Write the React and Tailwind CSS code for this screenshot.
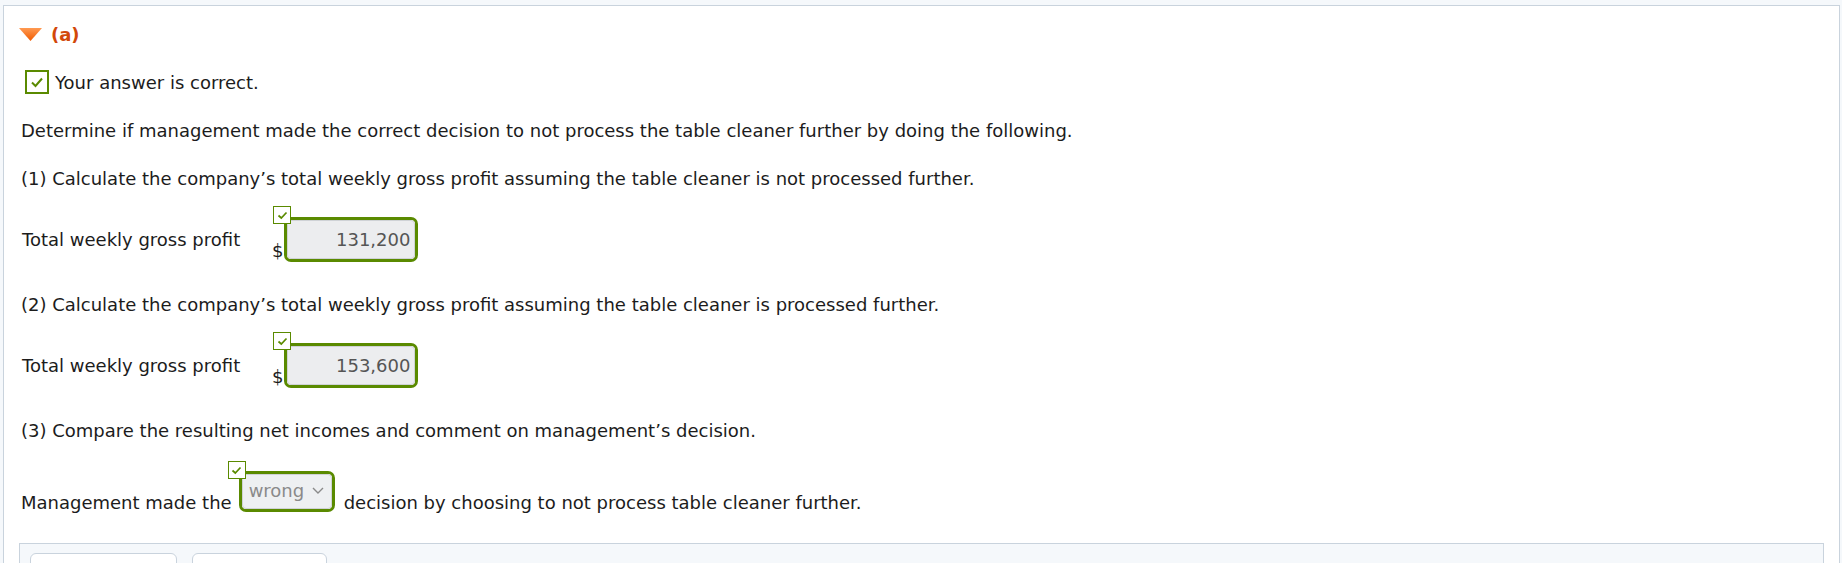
import React from "react";

const GREEN = "#5a8a00";

const BigCheck = () => (
  <span className="flex h-[24px] w-[24px] shrink-0 items-center justify-center border-2 border-[#5a8a00] bg-white">
    <svg width="14" height="12" viewBox="0 0 14 12">
      <path d="M2 6.5 L5.5 10 L12 2.5" fill="none" stroke={GREEN} strokeWidth="2" />
    </svg>
  </span>
);

const SmallCheck = ({ className }) => (
  <span
    className={
      "absolute flex h-[18px] w-[18px] items-center justify-center border-[1.5px] border-[#5a8a00] bg-white " +
      className
    }
  >
    <svg width="11" height="9" viewBox="0 0 11 9">
      <path d="M1.5 4.5 L4.3 7 L9.5 1.5" fill="none" stroke={GREEN} strokeWidth="1.7" />
    </svg>
  </span>
);

const AmountRow = ({ label, value }) => (
  <div className="flex h-[45px] items-center">
    <span className="w-[251px] shrink-0 pl-[1px]">{label}</span>
    <div className="flex h-full items-end">
      <span className="mr-[1px] leading-[18px] mb-[2px]">$</span>
      <div className="relative h-[45px] w-[134px] rounded-[7px] border-[3px] border-[#5a8a00]">
        <SmallCheck className="-left-[14px] -top-[14px]" />
        <div className="flex h-full items-center justify-end rounded-[4px] border border-[#cfd2d6] bg-[#ecedef] pr-[4px] text-[#555]">
          {value}
        </div>
      </div>
    </div>
  </div>
);

export default function App() {
  return (
    <div
      className="h-[563px] overflow-hidden bg-[#f5f8fb] pl-[3px] pr-[2px] pt-[5px] text-[18px] text-[#1c1c1c]"
      style={{ fontFamily: '"DejaVu Sans", Verdana, sans-serif' }}
    >
      <div className="h-[600px] border border-[#c9d3dd] bg-white pl-[17px] pr-[15px]">
        <div className="ml-[-2px] mt-[16px] flex h-[24px] items-center gap-[9px]">
          <svg width="23" height="13" viewBox="0 0 23 13">
            <defs>
              <linearGradient id="tri" x1="0" y1="0" x2="0" y2="1">
                <stop offset="0" stopColor="#ff9a52" />
                <stop offset="1" stopColor="#f05a00" />
              </linearGradient>
            </defs>
            <polygon points="0,0 23,0 11.5,13" fill="url(#tri)" />
          </svg>
          <span className="font-bold text-[#d2480a]">(a)</span>
        </div>

        <div className="mt-[24px] ml-[4px] flex h-[24px] items-center gap-[6px]">
          <BigCheck />
          <span>Your answer is correct.</span>
        </div>

        <p className="mt-[25px] leading-[24px]">
          Determine if management made the correct decision to not process the table cleaner further by doing the following.
        </p>

        <p className="mt-[24px] leading-[24px]">
          (1) Calculate the company’s total weekly gross profit assuming the table cleaner is not processed further.
        </p>

        <div className="mt-[26px]">
          <AmountRow label="Total weekly gross profit" value="131,200" />
        </div>

        <p className="mt-[31px] leading-[24px]">
          (2) Calculate the company’s total weekly gross profit assuming the table cleaner is processed further.
        </p>

        <div className="mt-[26px]">
          <AmountRow label="Total weekly gross profit" value="153,600" />
        </div>

        <p className="mt-[31px] leading-[24px]">
          (3) Compare the resulting net incomes and comment on management’s decision.
        </p>

        <div className="mt-[28px] flex h-[41px] items-end">
          <span className="mb-[-3px] leading-[24px]">Management made the</span>
          <div className="relative ml-[7px] h-[41px] w-[96px] rounded-[7px] border-[3px] border-[#5a8a00]">
            <SmallCheck className="-left-[14px] -top-[13px]" />
            <div className="flex h-full items-center justify-between rounded-[4px] border border-[#cfd2d6] bg-[#eef0f2] pl-[6px] pr-[7px] text-[#8a8a8a]">
              <span className="mt-[-1px] leading-none">wrong</span>
              <svg width="12" height="7" viewBox="0 0 12 7" className="mt-[-2px]">
                <path d="M1 1 L6 6 L11 1" fill="none" stroke="#8a8a8a" strokeWidth="1.4" />
              </svg>
            </div>
          </div>
          <span className="mb-[-3px] ml-[9px] leading-[24px]">
            decision by choosing to not process table cleaner further.
          </span>
        </div>

        <div className="ml-[-2px] mt-[31px] flex h-[60px] gap-[15px] border border-[#c9d3dd] bg-[#f5f8fb] pl-[10px] pt-[9px]">
          <div className="h-[40px] w-[147px] rounded-md border border-[#c9d3dd] bg-white" />
          <div className="h-[40px] w-[135px] rounded-md border border-[#c9d3dd] bg-white" />
        </div>
      </div>
    </div>
  );
}
